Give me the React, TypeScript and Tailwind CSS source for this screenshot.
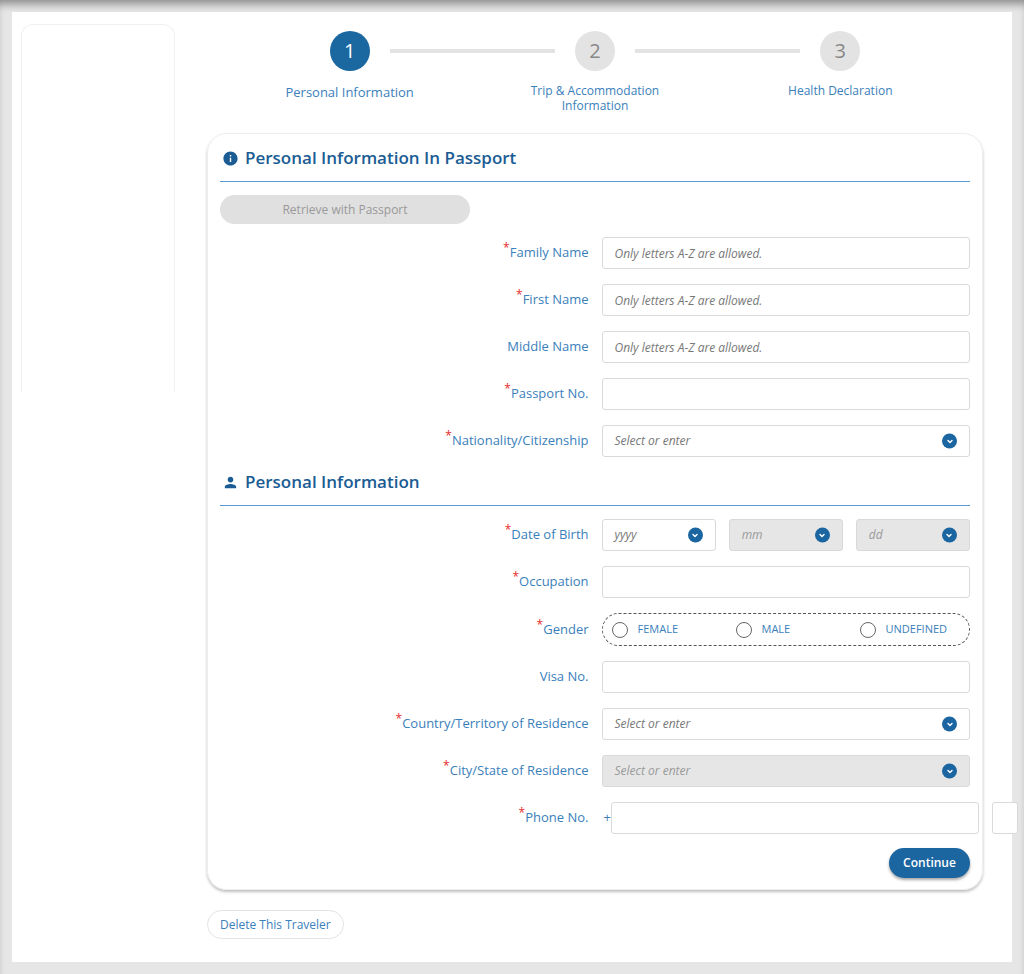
import React from "react";

const font = { fontFamily: '"Open Sans", "Noto Sans", sans-serif' };

const Chevron = () => (
  <span className="absolute right-[12px] top-1/2 -translate-y-1/2 flex h-[15px] w-[15px] items-center justify-center rounded-full bg-[#1b65a0]">
    <svg width="8" height="8" viewBox="0 0 10 10" fill="none">
      <path d="M2.5 3.8 5 6.3l2.5-2.5" stroke="#fff" strokeWidth="1.8" strokeLinecap="round" strokeLinejoin="round" />
    </svg>
  </span>
);

const TextInput = ({ placeholder = "", disabled = false, className = "" }: { placeholder?: string; disabled?: boolean; className?: string }) => (
  <input
    placeholder={placeholder}
    disabled={disabled}
    className={
      "h-8 w-full rounded-[3px] border border-[#d9d9d9] px-[12px] text-[12px] italic outline-none placeholder:text-[#777] " +
      (disabled ? "bg-[#e6e6e6]" : "bg-white") +
      " " +
      className
    }
  />
);

const Select = ({ placeholder, disabled = false }: { placeholder: string; disabled?: boolean }) => (
  <div
    className={
      "relative flex h-8 w-full items-center rounded-[3px] border border-[#d9d9d9] px-[12px] " +
      (disabled ? "bg-[#e6e6e6]" : "bg-white")
    }
  >
    <span className={"text-[12px] italic " + (disabled ? "text-[#999]" : "text-[#777]")}>{placeholder}</span>
    <Chevron />
  </div>
);

const Label = ({ text, required = false }: { text: string; required?: boolean }) => (
  <div className="flex items-center justify-end text-[13px] text-[#3a80bb]">
    {required && <span className="relative -top-[5px] text-[12px] text-[#e52b2b]">*</span>}
    <span>{text}</span>
  </div>
);

const Row = ({ label, required, children }: { label: string; required?: boolean; children: React.ReactNode }) => (
  <div className="grid grid-cols-2 gap-x-[13px]">
    <Label text={label} required={required} />
    <div>{children}</div>
  </div>
);

const SectionHead = ({ icon, title }: { icon: React.ReactNode; title: string }) => (
  <div className="flex items-center gap-[6px] border-b border-[#5a9bd3] pb-[11px] pl-[2px]">
    {icon}
    <h2 className="text-[17px] font-semibold leading-6 text-[#1a5c93]">{title}</h2>
  </div>
);

const InfoIcon = () => (
  <svg width="17" height="17" viewBox="0 0 24 24" fill="#1a5c93">
    <path d="M12 2C6.48 2 2 6.48 2 12s4.48 10 10 10 10-4.48 10-10S17.52 2 12 2zm1 15h-2v-6h2v6zm0-8h-2V7h2v2z" />
  </svg>
);

const PersonIcon = () => (
  <svg width="17" height="17" viewBox="0 0 24 24" fill="#1a5c93">
    <path d="M12 12c2.21 0 4-1.79 4-4s-1.79-4-4-4-4 1.79-4 4 1.79 4 4 4zm0 2c-2.67 0-8 1.34-8 4v2h16v-2c0-2.66-5.33-4-8-4z" />
  </svg>
);

const Radio = ({ label, className = "" }: { label: string; className?: string }) => (
  <label className={"flex items-center gap-[10px] " + className}>
    <span className="h-[16px] w-[16px] rounded-full border-[1.5px] border-[#666]" />
    <span className="text-[11px] text-[#3a80bb]">{label}</span>
  </label>
);

const steps = [
  { n: 1, label: "Personal Information", active: true },
  { n: 2, label: "Trip & Accommodation Information", active: false },
  { n: 3, label: "Health Declaration", active: false },
];

export default function App() {
  return (
    <div
      style={font}
      className="min-h-screen bg-[#e6e6e6] px-3 pt-3 shadow-[inset_0_8px_8px_-4px_rgba(0,0,0,0.4)]"
    >
      <div className="flex h-[950px] bg-white pl-[9px] pr-[29px] pt-3">
        <aside className="h-[368px] w-[154px] shrink-0 rounded-t-xl border border-b-0 border-[#f0f0f0]" />

        <main className="ml-8 flex-1">
          <div className="mt-[7px] grid h-[102px] grid-cols-3 px-5">
            {steps.map((s, i) => (
              <div key={s.n} className="relative flex flex-col items-center">
                {i < steps.length - 1 && (
                  <span className="absolute left-[calc(50%+40px)] top-[18px] h-[4px] w-[calc(100%-80px)] bg-[#e3e3e3]" />
                )}
                <div
                  className={
                    "flex h-10 w-10 items-center justify-center rounded-full text-[20px] " +
                    (s.active ? "bg-[#1b67a0] text-white" : "bg-[#e3e3e3] text-[#888]")
                  }
                >
                  {s.n}
                </div>
                <div
                  className={
                    "mt-3 w-[140px] text-center text-[#3a80bb] " +
                    (s.active ? "text-[13px] leading-[18px]" : "text-[12px] leading-[15px]")
                  }
                >
                  {s.label}
                </div>
              </div>
            ))}
          </div>

          <section className="rounded-[20px] border border-[#eee] px-3 pb-[11px] pt-3 shadow-[0_2px_3px_rgba(0,0,0,0.25)]">
            <SectionHead icon={<InfoIcon />} title="Personal Information In Passport" />
            <button className="mt-[13px] h-[29px] w-[250px] rounded-full bg-[#e0e0e0] text-[12px] text-[#999]">
              Retrieve with Passport
            </button>

            <div className="mt-[13px] flex flex-col gap-[15px]">
              <Row label="Family Name" required>
                <TextInput placeholder="Only letters A-Z are allowed." />
              </Row>
              <Row label="First Name" required>
                <TextInput placeholder="Only letters A-Z are allowed." />
              </Row>
              <Row label="Middle Name">
                <TextInput placeholder="Only letters A-Z are allowed." />
              </Row>
              <Row label="Passport No." required>
                <TextInput />
              </Row>
              <Row label="Nationality/Citizenship" required>
                <Select placeholder="Select or enter" />
              </Row>
            </div>

            <div className="mt-[13px]">
              <SectionHead icon={<PersonIcon />} title="Personal Information" />
            </div>

            <div className="mt-[13px] flex flex-col gap-[15px]">
              <Row label="Date of Birth" required>
                <div className="grid grid-cols-3 gap-[13px]">
                  <Select placeholder="yyyy" />
                  <Select placeholder="mm" disabled />
                  <Select placeholder="dd" disabled />
                </div>
              </Row>
              <Row label="Occupation" required>
                <TextInput />
              </Row>
              <Row label="Gender" required>
                <div className="flex h-[33px] items-center rounded-full border border-dashed border-[#555] pl-[9px]">
                  <Radio label="FEMALE" className="w-[124px]" />
                  <Radio label="MALE" className="w-[124px]" />
                  <Radio label="UNDEFINED" />
                </div>
              </Row>
              <Row label="Visa No.">
                <TextInput />
              </Row>
              <Row label="Country/Territory of Residence" required>
                <Select placeholder="Select or enter" />
              </Row>
              <Row label="City/State of Residence" required>
                <Select placeholder="Select or enter" disabled />
              </Row>
              <Row label="Phone No." required>
                <div className="flex items-center">
                  <span className="w-[21px] pl-[2px] text-[13px] text-[#3a80bb]">+</span>
                  <TextInput className="w-[94px] shrink-0" />
                  <TextInput className="ml-[13px] flex-1" />
                </div>
              </Row>
            </div>

            <div className="mt-[14px] flex justify-end">
              <button className="h-[30px] w-[81px] rounded-full bg-[#1b65a0] text-[12px] font-semibold text-white shadow-[0_2px_3px_rgba(0,0,0,0.35)]">
                Continue
              </button>
            </div>
          </section>

          <button className="mt-5 h-[29px] rounded-full border border-[#e3e3e3] px-3 text-[12px] text-[#3a80bb]">
            Delete This Traveler
          </button>
        </main>
      </div>
    </div>
  );
}
